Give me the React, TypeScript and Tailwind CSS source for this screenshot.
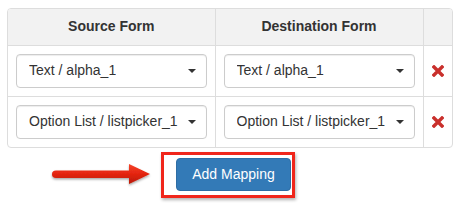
import React from 'react';

const font = { fontFamily: '"Liberation Sans", Arial, sans-serif' };

const rows = [
  { source: 'Text / alpha_1', dest: 'Text / alpha_1' },
  { source: 'Option List / listpicker_1', dest: 'Option List / listpicker_1' },
];

function FakeSelect({ value }: { value: string }) {
  return (
    <div className="flex h-[34px] w-full items-center justify-between rounded border border-[#ccc] bg-white pl-3 pr-[10px] text-[14px] text-[#333] shadow-[inset_0_1px_1px_rgba(0,0,0,0.075)]">
      <span className="truncate">{value}</span>
      <span className="ml-2 h-0 w-0 shrink-0 border-x-[4px] border-t-[4px] border-x-transparent border-t-[#333]" />
    </div>
  );
}

function RemoveIcon() {
  return (
    <svg width="12" height="12" viewBox="0 0 12 12" className="mx-auto block">
      <path d="M2 2 L10 10 M10 2 L2 10" stroke="#c9302c" strokeWidth="3.4" strokeLinecap="square" />
    </svg>
  );
}

function Arrow() {
  return (
    <svg width="104" height="28" viewBox="0 0 104 28" className="shrink-0">
      <defs>
        <linearGradient id="arrowFill" x1="0" y1="0" x2="0" y2="1">
          <stop offset="0" stopColor="#f5442a" />
          <stop offset="0.5" stopColor="#e42410" />
          <stop offset="1" stopColor="#b81a05" />
        </linearGradient>
        <filter id="arrowShadow" x="-10%" y="-30%" width="120%" height="170%">
          <feDropShadow dx="0" dy="1.5" stdDeviation="1.2" floodColor="#000" floodOpacity="0.35" />
        </filter>
      </defs>
      <path
        d="M7 9.5 L80 9.5 L80 3 L101 13 L80 23 L80 17 L7 17 Q3 17 3 13.25 Q3 9.5 7 9.5 Z"
        fill="url(#arrowFill)"
        filter="url(#arrowShadow)"
      />
    </svg>
  );
}

export default function App() {
  return (
    <div className="h-[208px] w-[461px] bg-white pt-[8px]" style={font}>
      <div className="ml-[7px] w-[446px] overflow-hidden rounded border border-[#ddd]">
        <table className="w-full table-fixed border-collapse">
          <colgroup>
            <col className="w-[207px]" />
            <col className="w-[208px]" />
            <col />
          </colgroup>
          <thead>
            <tr className="bg-[#f2f2f2]">
              <th className="h-[36px] border-r border-b border-[#ddd] px-2 text-center text-[14px] font-bold text-[#333]">
                Source Form
              </th>
              <th className="h-[36px] border-r border-b border-[#ddd] px-2 text-center text-[14px] font-bold text-[#333]">
                Destination Form
              </th>
              <th className="h-[36px] border-b border-[#ddd]" />
            </tr>
          </thead>
          <tbody>
            {rows.map((r, i) => {
              const last = i === rows.length - 1;
              return (
                <tr key={i}>
                  <td className={`border-r border-[#ddd] p-2 ${last ? '' : 'border-b'}`}>
                    <FakeSelect value={r.source} />
                  </td>
                  <td className={`border-r border-[#ddd] p-2 ${last ? '' : 'border-b'}`}>
                    <FakeSelect value={r.dest} />
                  </td>
                  <td className={`border-[#ddd] p-0 ${last ? '' : 'border-b'}`}>
                    <RemoveIcon />
                  </td>
                </tr>
              );
            })}
          </tbody>
        </table>
      </div>

      <div className="mt-[4px] flex items-center">
        <div className="ml-[49px]">
          <Arrow />
        </div>
        <div className="ml-[8px] flex h-[46px] w-[134px] items-start border-[3px] border-[#f0261b] pl-[12px] pt-[3px] shadow-[1px_2px_3px_rgba(0,0,0,0.3)]">
          <button className="h-[33px] w-[115px] rounded border border-[#2e6da4] bg-[#337ab7] text-[14px] text-white">
            Add Mapping
          </button>
        </div>
      </div>
    </div>
  );
}
